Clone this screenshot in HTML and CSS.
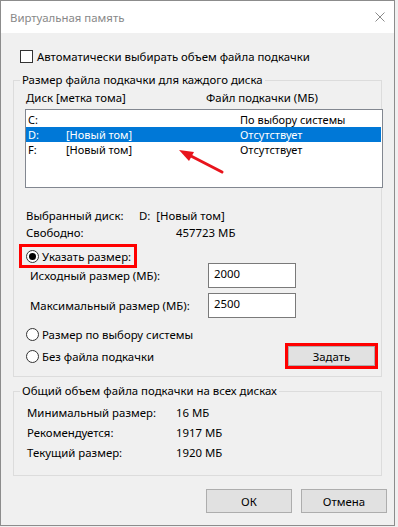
FILE: index.html
```html
<!DOCTYPE html>
<html lang="ru">
<head>
    <meta charset="UTF-8">
    <meta name="viewport" content="width=device-width, initial-scale=1.0">
    <title>Виртуальная память</title>
    <link rel="stylesheet" href="styles.css">
</head>
<body>
    <div class="window">
        <!-- Title bar -->
        <div class="titlebar">
            <span class="title">Виртуальная память</span>
            <svg class="close" width="10" height="10" viewBox="0 0 10 10">
                <path d="M0.5 0.5 L9.5 9.5 M9.5 0.5 L0.5 9.5" stroke="#8a8a8a" stroke-width="1" fill="none"/>
            </svg>
        </div>

        <div class="content">
            <div class="auto-row">
                <span class="checkbox"></span>
                <span>Автоматически выбирать объем файла подкачки</span>
            </div>

            <!-- Per-disk settings -->
            <fieldset class="group group-disks">
                <legend>Размер файла подкачки для каждого диска</legend>
                <div class="cols-head">
                    <span class="head-disk">Диск [метка тома]</span>
                    <span>Файл подкачки (МБ)</span>
                </div>
                <div class="listbox">
                    <div class="lb-row">
                        <span class="c1">C:</span><span class="c2"></span><span>По выбору системы</span>
                    </div>
                    <div class="lb-row selected">
                        <span class="c1">D:</span><span class="c2">[Новый том]</span><span>Отсутствует</span>
                    </div>
                    <div class="lb-row">
                        <span class="c1">F:</span><span class="c2">[Новый том]</span><span>Отсутствует</span>
                    </div>
                </div>

                <div class="info">
                    <div class="info-row">
                        <span class="info-label">Выбранный диск:</span>
                        <span>D:&nbsp; [Новый том]</span>
                    </div>
                    <div class="info-row">
                        <span class="info-label">Свободно:</span>
                        <span class="free">457723 МБ</span>
                    </div>
                </div>

                <div class="size-mode mark">
                    <span class="radio checked"></span>
                    <span>Указать размер:</span>
                </div>
                <div class="size-row first">
                    <span class="size-label">Исходный размер (МБ):</span>
                    <input class="size-input" type="text" value="2000">
                </div>
                <div class="size-row">
                    <span class="size-label">Максимальный размер (МБ):</span>
                    <input class="size-input" type="text" value="2500">
                </div>

                <div class="radio-row">
                    <span class="radio"></span>
                    <span>Размер по выбору системы</span>
                </div>
                <div class="radio-row last">
                    <span class="radio-label">
                        <span class="radio"></span>
                        <span>Без файла подкачки</span>
                    </span>
                    <span class="set-wrap mark">
                        <button class="btn btn-set">Задать</button>
                    </span>
                </div>
            </fieldset>

            <!-- Totals -->
            <fieldset class="group group-total">
                <legend>Общий объем файла подкачки на всех дисках</legend>
                <div class="total-row">
                    <span class="total-label">Минимальный размер:</span>
                    <span>16 МБ</span>
                </div>
                <div class="total-row">
                    <span class="total-label">Рекомендуется:</span>
                    <span>1917 МБ</span>
                </div>
                <div class="total-row">
                    <span class="total-label">Текущий размер:</span>
                    <span>1920 МБ</span>
                </div>
            </fieldset>

            <div class="buttons">
                <button class="btn">ОК</button>
                <button class="btn">Отмена</button>
            </div>
        </div>

        <!-- annotation arrow -->
        <svg class="arrow" width="395" height="526" viewBox="0 0 395 526">
            <line x1="221" y1="171" x2="188" y2="154" stroke="#e8141c" stroke-width="3" stroke-linecap="round"/>
            <polygon points="178,149 193,151 188,160" fill="#e8141c"/>
        </svg>
    </div>
</body>
</html>
```

FILE: styles.css
```css
body {
    margin: 0;
    background: #f0f0f0;
    font-family: "Noto Sans", "Segoe UI", sans-serif;
    font-size: 11.4px;
    color: #000;
}

.window {
    position: relative;
    width: 393px;
    height: 524px;
    border: 1px solid #8c8c8c;
    background: #f0f0f0;
}

.titlebar {
    height: 32px;
    background: #fff;
    display: flex;
    align-items: center;
    justify-content: space-between;
    padding: 0 9px;
}

.title {
    color: #888;
}

.content {
    padding: 0 12px;
}

.auto-row {
    display: flex;
    align-items: center;
    gap: 4px;
    height: 13px;
    margin: 17px 0 0 7px;
}

.checkbox {
    width: 13px;
    height: 13px;
    box-sizing: border-box;
    border: 1px solid #333;
    background: #fff;
}

.group {
    border: 1px solid #dcdcdc;
    margin: 10px 0 0;
    padding: 4px 0 7px 11px;
    min-width: 0;
}

.group legend {
    padding: 0 2px;
    margin-left: -5px;
    line-height: 14px;
}

.cols-head {
    display: flex;
    height: 14px;
    line-height: 14px;
    padding-left: 1px;
}

.head-disk {
    width: 180px;
}

.listbox {
    margin: 4px -2px 0 0;
    height: 79px;
    box-sizing: border-box;
    border: 1px solid #828790;
    background: #fff;
    padding: 2px 1px 0 0;
}

.lb-row {
    display: flex;
    align-items: center;
    height: 15px;
    line-height: 14px;
    padding-left: 2px;
    font-size: 11px;
}

.lb-row.selected {
    background: #0078d7;
    color: #fff;
}

.c1 {
    width: 38px;
}

.c2 {
    width: 174px;
}

.info {
    margin-top: 19px;
}

.info-row {
    display: flex;
    height: 17px;
    line-height: 17px;
    padding-left: 1px;
}

.info-label {
    width: 113px;
}

.free {
    padding-left: 37px;
}

.mark {
    border: 3px solid #f00;
}

.radio {
    width: 13px;
    height: 13px;
    box-sizing: border-box;
    border: 1px solid #333;
    border-radius: 50%;
    background: #fff;
    display: flex;
    align-items: center;
    justify-content: center;
}

.radio.checked::after {
    content: "";
    width: 7px;
    height: 7px;
    border-radius: 50%;
    background: #000;
}

.size-mode {
    display: flex;
    align-items: center;
    gap: 3px;
    width: fit-content;
    height: 24px;
    box-sizing: border-box;
    margin: 3px 0 0 -6px;
    padding: 0 3px 0 4px;
}

.size-row {
    display: flex;
    align-items: center;
    height: 25px;
    margin-top: 5px;
    padding-left: 5px;
}

.size-row.first {
    margin-top: -5px;
}

.size-label {
    width: 178px;
}

.size-input {
    width: 88px;
    height: 25px;
    box-sizing: border-box;
    border: 1px solid #7a7a7a;
    background: #fff;
    padding: 0 0 5px 5px;
    margin: 0;
    font: inherit;
    color: #000;
    outline: none;
}

.radio-row {
    display: flex;
    align-items: center;
    gap: 3px;
    height: 16px;
    margin-top: 8px;
    padding-left: 1px;
}

.radio-row.last {
    height: 26px;
    margin-top: 1px;
    justify-content: space-between;
}

.radio-label {
    display: flex;
    align-items: center;
    gap: 3px;
}

.set-wrap {
    display: flex;
    margin-right: 3px;
}

.btn {
    height: 24px;
    width: 86px;
    border: 1px solid #adadad;
    background: #e1e1e1;
    font: inherit;
    color: #000;
    padding: 0;
    margin: 0;
}

.btn-set {
    width: 87px;
    height: 20px;
}

.group-total {
    margin-top: 7px;
    padding: 5px 0 12px 13px;
}

.group-total legend {
    margin-left: -7px;
}

.total-row {
    display: flex;
    height: 20px;
    line-height: 20px;
}

.total-label {
    width: 149px;
}

.buttons {
    display: flex;
    justify-content: flex-end;
    gap: 9px;
    margin: 13px -5px 0 0;
}

.arrow {
    position: absolute;
    left: 0;
    top: 0;
    pointer-events: none;
}
```
